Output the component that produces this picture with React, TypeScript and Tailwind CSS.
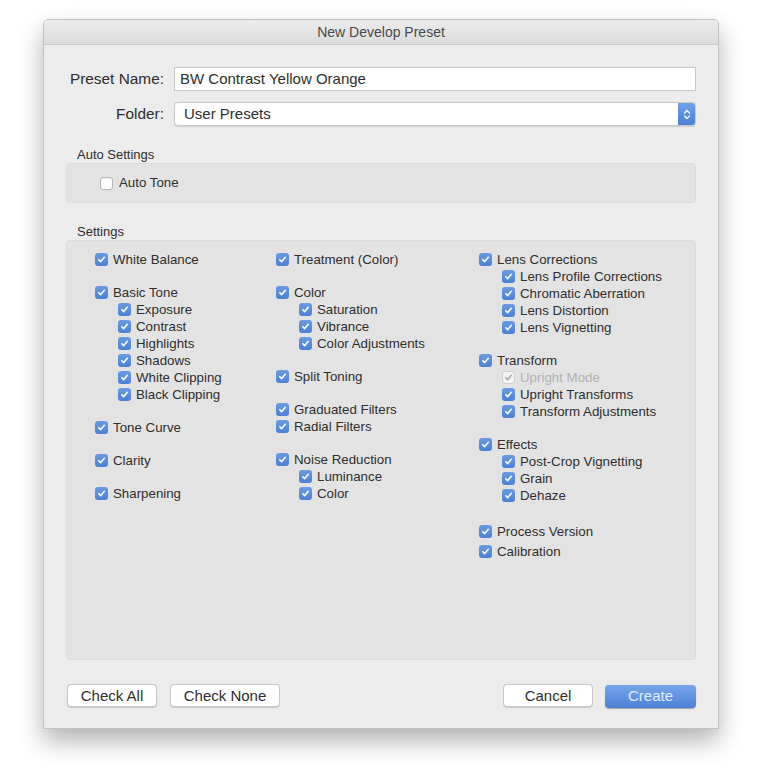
import React from 'react';

type Item = { label: string; sub?: boolean; gap?: number; disabled?: boolean };

const columns: { left: number; width: number; items: Item[] }[] = [
  {
    left: 28,
    width: 181,
    items: [
      { label: 'White Balance' },
      { label: 'Basic Tone', gap: 16 },
      { label: 'Exposure', sub: true },
      { label: 'Contrast', sub: true },
      { label: 'Highlights', sub: true },
      { label: 'Shadows', sub: true },
      { label: 'White Clipping', sub: true },
      { label: 'Black Clipping', sub: true },
      { label: 'Tone Curve', gap: 16 },
      { label: 'Clarity', gap: 16 },
      { label: 'Sharpening', gap: 16 },
    ],
  },
  {
    left: 0,
    width: 203,
    items: [
      { label: 'Treatment (Color)' },
      { label: 'Color', gap: 16 },
      { label: 'Saturation', sub: true },
      { label: 'Vibrance', sub: true },
      { label: 'Color Adjustments', sub: true },
      { label: 'Split Toning', gap: 16 },
      { label: 'Graduated Filters', gap: 16 },
      { label: 'Radial Filters' },
      { label: 'Noise Reduction', gap: 16 },
      { label: 'Luminance', sub: true },
      { label: 'Color', sub: true },
    ],
  },
  {
    left: 0,
    width: 200,
    items: [
      { label: 'Lens Corrections' },
      { label: 'Lens Profile Corrections', sub: true },
      { label: 'Chromatic Aberration', sub: true },
      { label: 'Lens Distortion', sub: true },
      { label: 'Lens Vignetting', sub: true },
      { label: 'Transform', gap: 16 },
      { label: 'Upright Mode', sub: true, disabled: true },
      { label: 'Upright Transforms', sub: true },
      { label: 'Transform Adjustments', sub: true },
      { label: 'Effects', gap: 16 },
      { label: 'Post-Crop Vignetting', sub: true },
      { label: 'Grain', sub: true },
      { label: 'Dehaze', sub: true },
      { label: 'Process Version', gap: 19 },
      { label: 'Calibration', gap: 3 },
    ],
  },
];

function Check({ on = true, disabled = false }: { on?: boolean; disabled?: boolean }) {
  if (!on) {
    return (
      <span className="block h-[13px] w-[13px] shrink-0 rounded-[3px] border border-[#b4b4b4] bg-white shadow-[inset_0_1px_1px_rgba(0,0,0,0.06)]" />
    );
  }
  return (
    <span
      className={
        disabled
          ? 'flex h-[13px] w-[13px] shrink-0 items-center justify-center rounded-[3px] border border-[#cfcfcf] bg-[#f4f4f4]'
          : 'flex h-[13px] w-[13px] shrink-0 items-center justify-center rounded-[3px] bg-gradient-to-b from-[#6a9be3] to-[#4b80d4]'
      }
    >
      <svg width="9" height="9" viewBox="0 0 9 9">
        <path
          d="M1.8 4.7 L3.7 6.6 L7.3 2.3"
          fill="none"
          stroke={disabled ? '#a8a8a8' : '#ffffff'}
          strokeWidth="1.6"
          strokeLinecap="round"
          strokeLinejoin="round"
        />
      </svg>
    </span>
  );
}

function Row({ item }: { item: Item }) {
  return (
    <div
      className={`flex h-[17px] items-center gap-[5px] ${item.sub ? 'pl-[23px]' : ''}`}
      style={item.gap ? { marginTop: item.gap } : undefined}
    >
      <Check disabled={item.disabled} />
      <span className={`text-[13.3px] leading-none ${item.disabled ? 'text-[#b2b2b2]' : 'text-[#2e2e2e]'}`}>
        {item.label}
      </span>
    </div>
  );
}

function Button({ children, primary = false, width }: { children: React.ReactNode; primary?: boolean; width: string }) {
  return (
    <button
      className={
        primary
          ? `${width} h-[23px] rounded-[4px] bg-gradient-to-b from-[#76a6ea] to-[#4c80d5] text-[15px] text-[#e3edfc] shadow-[0_0.5px_1px_rgba(0,0,0,0.3)]`
          : `${width} h-[23px] rounded-[4px] border border-[#c9c9c9] bg-white text-[15px] text-[#2e2e2e] shadow-[0_0.5px_1px_rgba(0,0,0,0.15)]`
      }
    >
      {children}
    </button>
  );
}

export default function App() {
  return (
    <div className="min-h-[768px] bg-white pl-[43px] pt-[19px] font-['Liberation_Sans',Arial,sans-serif]">
      <div className="w-[676px] overflow-hidden rounded-t-[5px] border border-[#c2c2c2] bg-[#ececec] shadow-[0_12px_24px_rgba(0,0,0,0.3)]">
        <div className="flex h-[25px] items-center justify-center border-b border-[#cbcbcb] bg-gradient-to-b from-[#ececec] to-[#dcdcdc]">
          <span className="text-[14px] text-[#4a4a4a]">New Develop Preset</span>
        </div>

        <div className="px-[22px] pb-[20px] pt-[22px]">
          <div className="flex items-center">
            <span className="w-[98px] text-right text-[15.4px] text-[#2e2e2e]">Preset Name:</span>
            <div className="ml-[10px] flex h-[24px] flex-1 items-center border border-[#c6c6c6] bg-white pl-[5px] text-[15px] text-[#2e2e2e]">
              BW Contrast Yellow Orange
            </div>
          </div>
          <div className="mt-[11px] flex items-center">
            <span className="w-[98px] text-right text-[15.4px] text-[#2e2e2e]">Folder:</span>
            <div className="ml-[10px] flex h-[24px] flex-1 items-center justify-between rounded-[4px] border border-[#c9c9c9] bg-white pl-[9px] text-[15px] text-[#2e2e2e] shadow-[0_0.5px_1px_rgba(0,0,0,0.12)]">
              <span>User Presets</span>
              <span className="flex h-[22px] w-[17px] items-center justify-center rounded-r-[3px] bg-gradient-to-b from-[#6fa2ea] to-[#4a7fd5]">
                <svg width="8" height="13" viewBox="0 0 8 13">
                  <path d="M1.5 5 L4 2.5 L6.5 5 M1.5 8 L4 10.5 L6.5 8" fill="none" stroke="#fff" strokeWidth="1.3" strokeLinecap="round" strokeLinejoin="round" />
                </svg>
              </span>
            </div>
          </div>

          <div className="mt-[21px] h-[16px] pl-[11px] text-[13px] leading-[16px] text-[#2e2e2e]">Auto Settings</div>
          <div className="flex h-[40px] items-center gap-[6px] rounded-[4px] border border-[#dcdcdc] bg-[#e3e3e3] pl-[33px]">
            <Check on={false} />
            <span className="text-[13.3px] text-[#2e2e2e]">Auto Tone</span>
          </div>

          <div className="mt-[21px] h-[16px] pl-[11px] text-[13px] leading-[16px] text-[#2e2e2e]">Settings</div>
          <div className="flex h-[420px] rounded-[4px] border border-[#dcdcdc] bg-[#e3e3e3] pt-[10px]">
            {columns.map((col, i) => (
              <div key={i} className="flex flex-col" style={{ marginLeft: col.left, width: col.width }}>
                {col.items.map((item, j) => (
                  <Row key={j} item={item} />
                ))}
              </div>
            ))}
          </div>

          <div className="mt-[24px] flex items-center">
            <div className="ml-[1px]">
              <Button width="w-[90px]">Check All</Button>
            </div>
            <div className="ml-[13px]">
              <Button width="w-[110px]">Check None</Button>
            </div>
            <div className="ml-auto">
              <Button width="w-[90px]">Cancel</Button>
            </div>
            <div className="ml-[12px]">
              <Button primary width="w-[91px]">Create</Button>
            </div>
          </div>
        </div>
      </div>
    </div>
  );
}
